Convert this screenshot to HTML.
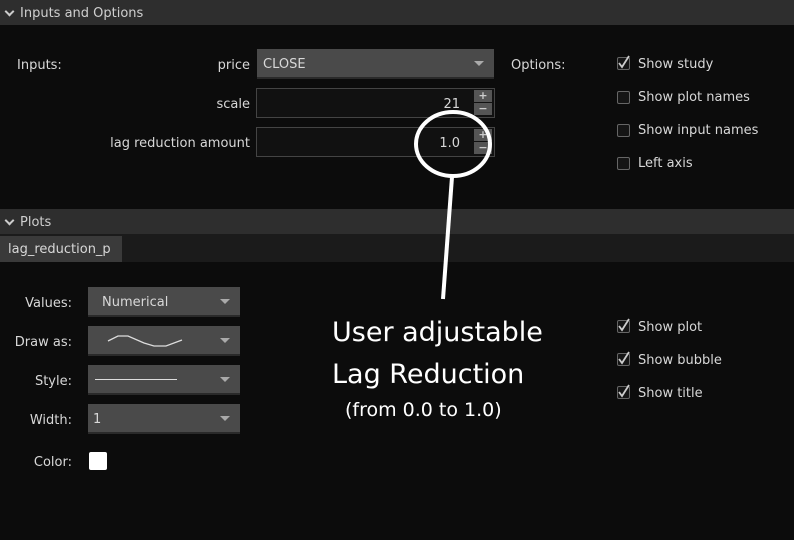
<!DOCTYPE html>
<html><head><style>
body{margin:0;width:794px;height:540px;background:#0c0c0c;font-family:"DejaVu Sans","Liberation Sans",sans-serif;color:#d8d8d8;font-size:13px;position:relative;overflow:hidden}
.a{position:absolute}
.hdr{position:absolute;left:0;width:794px;height:25px;background:#2e2e2e;color:#cfcfcf;font-size:13px;line-height:27px}
.hdr span{margin-left:20px}
.chev{position:absolute;left:6px;top:8px;width:5px;height:5px;border-right:2px solid #ccc;border-bottom:2px solid #ccc;transform:rotate(45deg)}
.lbl{position:absolute;text-align:right;line-height:34px}
.dd{position:absolute;background:#4a4a4a;border-bottom:2px solid #2a2a2a;box-sizing:border-box}
.arr{position:absolute;right:10px;top:12px;border-left:5px solid transparent;border-right:5px solid transparent;border-top:5px solid #aaa}
.inp{position:absolute;background:#111;border:1px solid #444;box-sizing:border-box;text-align:right;line-height:32px}
.sp{position:absolute;width:18px;height:12px;background:#555;color:#ccc;font-size:11px;line-height:12px;text-align:center;font-weight:bold}
.cb{position:absolute;width:11px;height:11px;border:1px solid #666;border-radius:2px;background:#151515}
.ct{position:absolute;line-height:18px}
</style></head><body>
<div class="hdr" style="top:0"><div class="chev"></div><span>Inputs and Options</span></div>
<div class="a" style="left:17px;top:58px">Inputs:</div>
<div class="lbl" style="left:0;width:250px;top:49px">price</div>
<div class="dd" style="left:257px;top:49px;width:237px;height:30px;line-height:32px;padding-left:6px">CLOSE<div class="arr"></div></div>
<div class="lbl" style="left:0;width:250px;top:88px">scale</div>
<div class="inp" style="left:256px;top:88px;width:239px;height:30px;padding-right:34px">21</div>
<div class="sp" style="left:474px;top:90px">+</div><div class="sp" style="left:474px;top:103px">−</div>
<div class="lbl" style="left:0;width:250px;top:127px">lag reduction amount</div>
<div class="inp" style="left:256px;top:127px;width:239px;height:30px;padding-right:34px">1.0</div>
<div class="sp" style="left:474px;top:129px">+</div><div class="sp" style="left:474px;top:142px">−</div>
<div class="a" style="left:511px;top:58px">Options:</div>
<div class="cb" style="left:617px;top:57px"></div><div class="ct" style="left:638px;top:56px">Show study</div>
<div class="cb" style="left:617px;top:91px"></div><div class="ct" style="left:638px;top:89px">Show plot names</div>
<div class="cb" style="left:617px;top:124px"></div><div class="ct" style="left:638px;top:122px">Show input names</div>
<div class="cb" style="left:617px;top:157px"></div><div class="ct" style="left:638px;top:155px">Left axis</div>
<div class="hdr" style="top:209px"><div class="chev"></div><span>Plots</span></div>
<div class="a" style="left:0;top:234px;width:794px;height:28px;background:#1b1b1b"></div>
<div class="a" style="left:0;top:236px;width:122px;height:26px;background:#3a3a3a;line-height:28px;padding-left:8px;box-sizing:border-box">lag_reduction_p</div>
<div class="lbl" style="left:0;width:72px;top:287px">Values:</div>
<div class="dd" style="left:88px;top:287px;width:152px;height:30px;line-height:32px;padding-left:14px">Numerical<div class="arr"></div></div>
<div class="lbl" style="left:0;width:72px;top:326px">Draw as:</div>
<div class="dd" style="left:88px;top:326px;width:152px;height:30px"><svg class="a" style="left:18px;top:6px" width="80" height="18"><polyline points="2,9 12,4 22,4 38,11 48,14 60,14 76,8" fill="none" stroke="#ddd" stroke-width="1.3"/></svg><div class="arr"></div></div>
<div class="lbl" style="left:0;width:72px;top:365px">Style:</div>
<div class="dd" style="left:88px;top:365px;width:152px;height:30px"><div class="a" style="left:7px;top:14px;width:82px;height:1px;background:#ddd"></div><div class="arr"></div></div>
<div class="lbl" style="left:0;width:72px;top:404px">Width:</div>
<div class="dd" style="left:88px;top:404px;width:152px;height:30px;line-height:32px;padding-left:5px">1<div class="arr"></div></div>
<div class="lbl" style="left:0;width:72px;top:446px">Color:</div>
<div class="a" style="left:89px;top:452px;width:18px;height:18px;background:#fff;border-radius:2px"></div>
<div class="cb" style="left:617px;top:320px"></div><div class="ct" style="left:638px;top:319px">Show plot</div>
<div class="cb" style="left:617px;top:353px"></div><div class="ct" style="left:638px;top:352px">Show bubble</div>
<div class="cb" style="left:617px;top:386px"></div><div class="ct" style="left:638px;top:385px">Show title</div>
<svg class="a" style="left:0;top:0" width="794" height="540">
<g fill="none" stroke="#ccc" stroke-width="1.8">
<polyline points="619,63 622,67 629,56"/><polyline points="619,326 622,330 629,319"/><polyline points="619,359 622,363 629,352"/><polyline points="619,392 622,396 629,385"/></g>
<ellipse cx="453" cy="144" rx="37" ry="32" fill="none" stroke="#fff" stroke-width="4"/>
<line x1="452" y1="177" x2="443" y2="299" stroke="#fff" stroke-width="4"/>
</svg>
<div class="a" style="left:332px;top:312px;font-size:27px;color:#fff;line-height:42px">User adjustable<br>Lag Reduction</div>
<div class="a" style="left:345px;top:399px;font-size:19px;color:#fff">(from 0.0 to 1.0)</div>
</body></html>
